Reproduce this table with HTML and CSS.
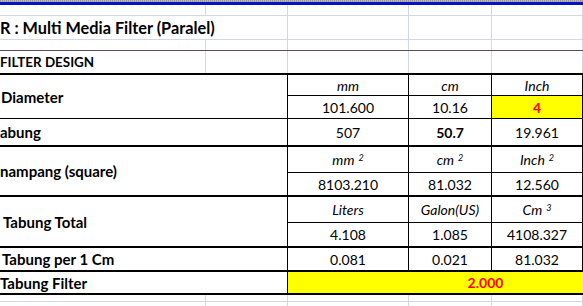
FILE: index.html
```html
<!DOCTYPE html>
<html>
<head>
<meta charset="utf-8">
<link rel="stylesheet" href="styles.css">
</head>
<body>
<div class="sheet">
  <div class="band"></div>
  <div class="blue"></div>
  <div class="grid top">
    <div></div><div></div><div></div><div></div><div></div><div></div>
    <div class="title span2">R : Multi Media Filter (Paralel)</div><div></div><div></div><div></div><div></div>
    <div></div><div></div><div></div><div></div><div></div><div></div>
  </div>
  <div class="darkline"></div>
  <div class="grid one">
    <div class="sect">FILTER DESIGN</div><div></div><div></div><div></div><div></div><div></div>
  </div>
  <div class="table">
    <div class="group thin">
      <div class="label lp1">Diameter</div>
      <div class="data">
        <div class="sub hdr h20"><div class="c">mm</div><div class="c">cm</div><div class="c">Inch</div></div>
        <div class="sub val h22"><div class="c">101.600</div><div class="c">10.16</div><div class="c hl">4</div></div>
      </div>
    </div>
    <div class="group thick">
      <div class="label">abung</div>
      <div class="data">
        <div class="sub h26"><div class="c">507</div><div class="c b">50.7</div><div class="c">19.961</div></div>
      </div>
    </div>
    <div class="group thick">
      <div class="label">nampang (square)</div>
      <div class="data">
        <div class="sub hdr h25"><div class="c">mm<sup>2</sup></div><div class="c">cm<sup>2</sup></div><div class="c">Inch<sup>2</sup></div></div>
        <div class="sub val h22"><div class="c">8103.210</div><div class="c">81.032</div><div class="c">12.560</div></div>
      </div>
    </div>
    <div class="group thick">
      <div class="label lp3">Tabung Total</div>
      <div class="data">
        <div class="sub hdr h25"><div class="c">Liters</div><div class="c">Galon(US)</div><div class="c">Cm<sup>3</sup></div></div>
        <div class="sub val h23"><div class="c">4.108</div><div class="c">1.085</div><div class="c">4108.327</div></div>
      </div>
    </div>
    <div class="group thick">
      <div class="label lp2">Tabung per 1 Cm</div>
      <div class="data">
        <div class="sub h22"><div class="c">0.081</div><div class="c">0.021</div><div class="c">81.032</div></div>
      </div>
    </div>
    <div class="group thick">
      <div class="label">Tabung Filter</div>
      <div class="data wide">
        <div class="sub h21 merged"><div class="c hl">2.000</div></div>
      </div>
    </div>
  </div>
  <div class="grid bottom">
    <div></div><div></div><div></div><div></div><div></div><div></div>
    <div></div><div></div><div></div><div></div><div></div><div></div>
  </div>
</div>
</body>
</html>
```

FILE: styles.css
```css
html, body {
  margin: 0;
  padding: 0;
  background: #ffffff;
}
body {
  width: 583px;
  height: 306px;
  overflow: hidden;
  font-family: Lato, "Liberation Sans", sans-serif;
  color: #000;
}
.sheet {
  width: 583px;
  height: 306px;
  overflow: hidden;
}
.band {
  height: 2px;
  background: repeating-linear-gradient(90deg, #9a9a9a 0 1px, #b8b8b8 1px 2px);
}
.blue {
  height: 3px;
  background: #0a10c4;
}
.grid {
  display: grid;
  grid-template-columns: 205px 81px 120px 82px 90px 1fr;
  gap: 1px;
  background: #d0d7e5;
  width: 600px;
}
.grid > div {
  background: #fff;
}
.top {
  grid-template-rows: 10px 23px 10px;
}
.one {
  grid-template-rows: 22px;
}
.bottom {
  grid-template-rows: 6px 4px;
}
.span2 {
  grid-column: span 2;
}
.title {
  font-weight: 700;
  font-size: 16.3px;
  line-height: 23px;
  white-space: nowrap;
}
.darkline {
  height: 1px;
  background: #5e4b5b;
}
.sect {
  font-weight: 700;
  font-size: 13.4px;
  line-height: 22px;
  white-space: nowrap;
}
.table {
  width: 700px;
  border-top: 2px solid #000;
}
.group {
  display: flex;
}
.group.thin {
  border-bottom: 1px solid #000;
}
.group.thick {
  border-bottom: 2px solid #000;
}
.label {
  width: 287px;
  display: flex;
  align-items: center;
  font-weight: 700;
  font-size: 15px;
  white-space: nowrap;
}
.lp1 { padding-left: 1px; width: 286px; }
.lp2 { padding-left: 2px; width: 285px; }
.lp3 { padding-left: 3px; width: 284px; }
.data {
  width: 296px;
  display: flex;
  flex-direction: column;
}
.data.wide {
  width: 397px;
}
.sub {
  display: grid;
  grid-template-columns: 121px 83px 92px;
}
.sub + .sub {
  border-top: 1px solid #000;
}
.sub.merged {
  grid-template-columns: 397px;
}
.c {
  display: flex;
  align-items: center;
  justify-content: center;
  border-left: 1px solid #000;
  font-size: 14px;
  white-space: nowrap;
}
.c:last-child {
  border-right: 1px solid #000;
}
.hdr .c {
  font-style: italic;
}
.c sup {
  font-size: 9px;
  margin-left: 4px;
  position: relative;
  top: -2px;
  vertical-align: super;
  line-height: 0;
}
.b {
  font-weight: 700;
}
.hl {
  background: #ffff00;
  color: #ff0000;
  font-weight: 700;
}
.h20 { height: 20px; }
.h21 { height: 21px; }
.h22 { height: 22px; }
.h23 { height: 23px; }
.h25 { height: 25px; }
.h26 { height: 26px; }
```
